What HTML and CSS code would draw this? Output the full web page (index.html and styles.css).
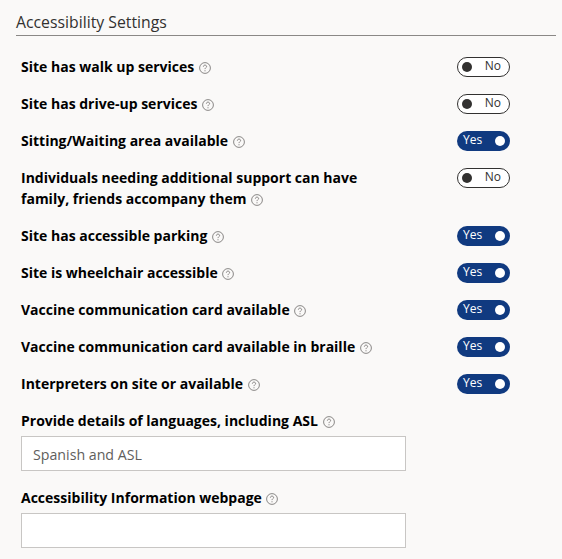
FILE: index.html
```html
<!DOCTYPE html>
<html lang="en">
<head>
  <meta charset="UTF-8" />
  <title>Accessibility Settings</title>
  <link rel="stylesheet" href="styles.css">
</head>
<body>
  <svg class="icon-defs" width="0" height="0" aria-hidden="true">
    <symbol id="help" viewBox="0 0 12 12">
      <circle cx="6" cy="6" r="5.4" fill="none" stroke="currentColor" stroke-width="0.8" />
      <path d="M4.4 4.7c0-1 .7-1.6 1.6-1.6s1.6.6 1.6 1.4c0 1.2-1.6 1.3-1.6 2.6" fill="none" stroke="currentColor" stroke-width="0.8" />
      <circle cx="6" cy="8.8" r="0.55" fill="currentColor" />
    </symbol>
  </svg>

  <section class="settings">
    <h2>Accessibility Settings</h2>

    <div class="rows">
      <div class="row">
        <div class="label">Site has walk up services <svg class="help"><use href="#help" /></svg></div>
        <span class="toggle off"><i></i><b>No</b></span>
      </div>
      <div class="row">
        <div class="label">Site has drive-up services <svg class="help"><use href="#help" /></svg></div>
        <span class="toggle off"><i></i><b>No</b></span>
      </div>
      <div class="row">
        <div class="label">Sitting/Waiting area available <svg class="help"><use href="#help" /></svg></div>
        <span class="toggle on"><b>Yes</b><i></i></span>
      </div>
      <div class="row">
        <div class="label">Individuals needing additional support can have<br>family, friends accompany them <svg class="help"><use href="#help" /></svg></div>
        <span class="toggle off"><i></i><b>No</b></span>
      </div>
      <div class="row">
        <div class="label">Site has accessible parking <svg class="help"><use href="#help" /></svg></div>
        <span class="toggle on"><b>Yes</b><i></i></span>
      </div>
      <div class="row">
        <div class="label">Site is wheelchair accessible <svg class="help"><use href="#help" /></svg></div>
        <span class="toggle on"><b>Yes</b><i></i></span>
      </div>
      <div class="row">
        <div class="label">Vaccine communication card available <svg class="help"><use href="#help" /></svg></div>
        <span class="toggle on"><b>Yes</b><i></i></span>
      </div>
      <div class="row">
        <div class="label">Vaccine communication card available in braille <svg class="help"><use href="#help" /></svg></div>
        <span class="toggle on"><b>Yes</b><i></i></span>
      </div>
      <div class="row">
        <div class="label">Interpreters on site or available <svg class="help"><use href="#help" /></svg></div>
        <span class="toggle on"><b>Yes</b><i></i></span>
      </div>
    </div>

    <div class="field">
      <label class="label" for="languages">Provide details of languages, including ASL <svg class="help"><use href="#help" /></svg></label>
      <input type="text" id="languages" value="Spanish and ASL" />
    </div>
    <div class="field">
      <label class="label" for="webpage">Accessibility Information webpage <svg class="help"><use href="#help" /></svg></label>
      <input type="text" id="webpage" />
    </div>
  </section>
</body>
</html>
```

FILE: styles.css
```css
/* Reset and global settings */
* {
  margin: 0;
  padding: 0;
  box-sizing: border-box;
}
body {
  font-family: "Open Sans", "Noto Sans", Arial, sans-serif;
  background-color: #faf9f8;
  color: #000;
  overflow: hidden;
}
.icon-defs {
  position: absolute;
}

/* Section */
.settings {
  padding: 9px 6px 0 16px;
}
.settings h2 {
  font-size: 15.8px;
  font-weight: 400;
  line-height: 26px;
  color: #323130;
  border-bottom: 1px solid #8a8886;
  margin-bottom: 20px;
}

/* Toggle rows */
.rows {
  display: flex;
  flex-direction: column;
  gap: 16px;
  padding-left: 5px;
  width: 494px;
}
.row {
  display: flex;
  justify-content: space-between;
  align-items: flex-start;
}
.label {
  display: block;
  font-size: 14px;
  font-weight: 700;
  line-height: 21px;
  color: #000;
}
.help {
  width: 12px;
  height: 12px;
  margin-left: 1px;
  vertical-align: -2px;
  color: #6d6b69;
}

/* Toggle switch */
.toggle {
  flex: none;
  display: flex;
  align-items: center;
  justify-content: space-between;
  width: 53px;
  height: 20px;
  margin-top: 1px;
  padding: 0 5px 0 6px;
  border-radius: 10px;
  font-size: 12px;
}
.toggle b {
  font-weight: 400;
  padding-bottom: 3px;
}
.toggle i {
  width: 10px;
  height: 10px;
  border-radius: 50%;
}
.toggle.off {
  background-color: #fff;
  border: 1px solid #323130;
  color: #323130;
  padding: 0 8px 0 4px;
}
.toggle.off i {
  background-color: #323130;
}
.toggle.on {
  background-color: #103a80;
  color: #fff;
}
.toggle.on i {
  background-color: #fff;
}

/* Text fields */
.field {
  margin-left: 5px;
  width: 385px;
  margin-top: 16px;
}
.field .label {
  margin-bottom: 5px;
}
.field input {
  display: block;
  width: 100%;
  height: 35px;
  padding: 2px 11px 0;
  border: 1px solid #c8c6c4;
  background-color: #fff;
  font-family: inherit;
  font-size: 14.2px;
  color: #605e5c;
}
```
